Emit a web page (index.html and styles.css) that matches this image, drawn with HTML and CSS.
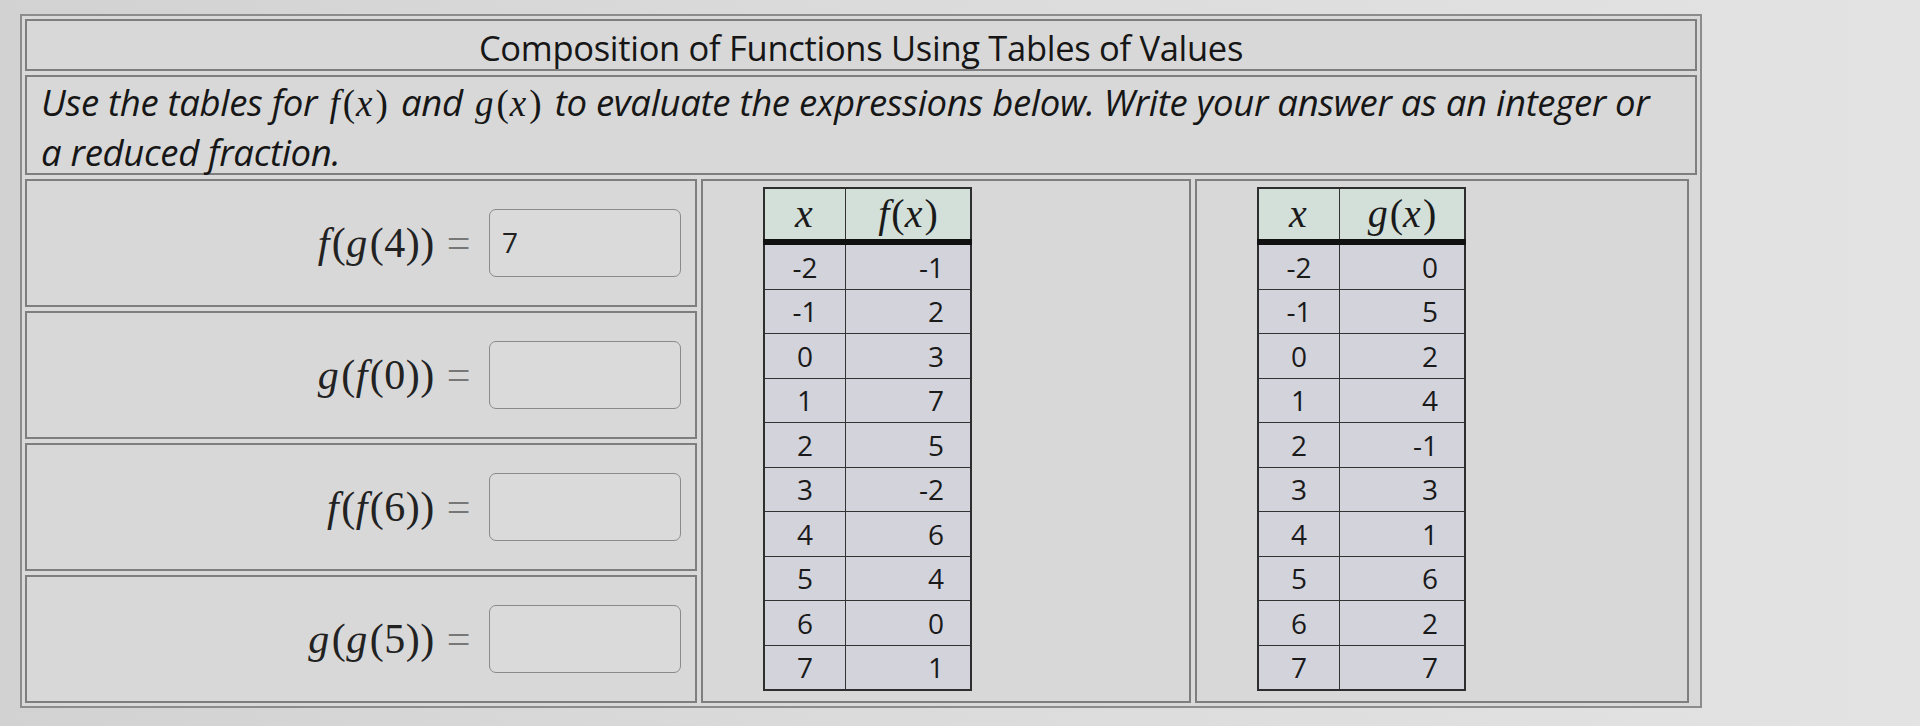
FILE: index.html
```html
<!DOCTYPE html>
<html>
<head>
<meta charset="utf-8">
<link rel="stylesheet" href="styles.css">
</head>
<body>
<div class="outer">
  <div class="cell title">Composition of Functions Using Tables of Values</div>
  <div class="cell instr"><span class="ln">Use the tables for <span class="m"><i>f</i>(<i>x</i>)</span> and <span class="m"><i>g</i>(<i>x</i>)</span> to evaluate the expressions below. Write your answer as an integer or</span><span class="ln">a reduced fraction.</span></div>
  <div class="lower">
    <div class="eqs">
      <div class="cell eqrow"><span class="m eq"><i>f</i>(<i>g</i>(4))<span class="eqs-sign">=</span></span><div class="inp">7</div></div>
      <div class="cell eqrow"><span class="m eq"><i>g</i>(<i>f</i>(0))<span class="eqs-sign">=</span></span><div class="inp"></div></div>
      <div class="cell eqrow"><span class="m eq"><i>f</i>(<i>f</i>(6))<span class="eqs-sign">=</span></span><div class="inp"></div></div>
      <div class="cell eqrow"><span class="m eq"><i>g</i>(<i>g</i>(5))<span class="eqs-sign">=</span></span><div class="inp"></div></div>
    </div>
    <div class="cell panel">
      <table class="vt">
        <thead><tr><th class="m"><i>x</i></th><th class="m"><i>f</i>(<i>x</i>)</th></tr></thead>
        <tbody>
          <tr><td>-2</td><td>-1</td></tr>
          <tr><td>-1</td><td>2</td></tr>
          <tr><td>0</td><td>3</td></tr>
          <tr><td>1</td><td>7</td></tr>
          <tr><td>2</td><td>5</td></tr>
          <tr><td>3</td><td>-2</td></tr>
          <tr><td>4</td><td>6</td></tr>
          <tr><td>5</td><td>4</td></tr>
          <tr><td>6</td><td>0</td></tr>
          <tr><td>7</td><td>1</td></tr>
        </tbody>
      </table>
    </div>
    <div class="cell panel">
      <table class="vt">
        <thead><tr><th class="m"><i>x</i></th><th class="m"><i>g</i>(<i>x</i>)</th></tr></thead>
        <tbody>
          <tr><td>-2</td><td>0</td></tr>
          <tr><td>-1</td><td>5</td></tr>
          <tr><td>0</td><td>2</td></tr>
          <tr><td>1</td><td>4</td></tr>
          <tr><td>2</td><td>-1</td></tr>
          <tr><td>3</td><td>3</td></tr>
          <tr><td>4</td><td>1</td></tr>
          <tr><td>5</td><td>6</td></tr>
          <tr><td>6</td><td>2</td></tr>
          <tr><td>7</td><td>7</td></tr>
        </tbody>
      </table>
    </div>
  </div>
</div>
</body>
</html>
```
FILE: styles.css
```css
html, body {
  margin: 0;
  padding: 0;
}
body {
  background: linear-gradient(90deg, #d2d2d2 0%, #dadada 40%, #e3e3e3 100%);
  height: 726px;
  overflow: hidden;
  font-family: "Open Sans", "Noto Sans", sans-serif;
  color: #1a1a1a;
}
.outer {
  margin: 14px 0 0 20px;
  width: 1672px;
  border: 2px solid #8c8c8c;
  padding: 3px;
  display: flex;
  flex-direction: column;
  gap: 4px;
  background: #d9d9d9;
}
.cell {
  border: 2px solid #7e7e7e;
  background: #d8d8d8;
}
.title {
  height: 52px;
  display: flex;
  align-items: center;
  justify-content: center;
  font-size: 34.5px;
  letter-spacing: -0.3px;
  padding-top: 4px;
  box-sizing: border-box;
  color: #161616;
}
.instr {
  height: 100px;
  padding: 0 20px 0 14px;
  font-size: 36.5px;
  font-style: italic;
  box-sizing: border-box;
  letter-spacing: -0.3px;
  color: #161616;
}
.ln {
  display: block;
  height: 50px;
  line-height: 50px;
  white-space: nowrap;
}
.m {
  font-family: "Liberation Serif", "Times New Roman", serif;
  font-style: normal;
}
.instr .m {
  font-size: 37px;
  letter-spacing: 1px;
  padding: 0 3px;
}
.m i {
  font-style: italic;
  padding-right: 2px;
}
.lower {
  display: grid;
  grid-template-columns: 672px 490px 494px;
  gap: 4px;
}
.eqs {
  display: flex;
  flex-direction: column;
  gap: 4px;
}
.eqrow {
  height: 124px;
  display: flex;
  align-items: center;
  justify-content: flex-end;
  padding-right: 14px;
}
.eq {
  font-size: 42px;
  margin-right: 18px;
  color: #222;
  letter-spacing: 0.5px;
}
.eqs-sign {
  color: #777;
  margin-left: 12px;
}
.inp {
  width: 192px;
  height: 68px;
  border: 1.5px solid #8a8a8a;
  border-radius: 7px;
  box-sizing: border-box;
  font-size: 28px;
  padding-left: 12px;
  line-height: 64px;
  color: #222;
  background: #dadada;
}
.panel {
  padding: 6px 0 0 60px;
}
.vt {
  border-collapse: collapse;
  border: 2px solid #2e2e2e;
  font-size: 28px;
}
.vt th {
  background: #d3dfd9;
  height: 50px;
  font-weight: normal;
  font-size: 40px;
  border: 1px solid #333;
  border-bottom: 6px solid #111;
  padding: 0;
  line-height: 48px;
}
.vt td {
  background: #d3d3dc;
  height: 43.5px;
  border: 1.5px solid #333;
  padding: 0;
  line-height: 40px;
}
.vt td:first-child,
.vt th:first-child {
  width: 80px;
  text-align: center;
}
.vt td:last-child {
  width: 124px;
  text-align: right;
  padding-right: 26px;
  box-sizing: border-box;
}
.vt th:last-child {
  width: 124px;
  text-align: center;
}
```
